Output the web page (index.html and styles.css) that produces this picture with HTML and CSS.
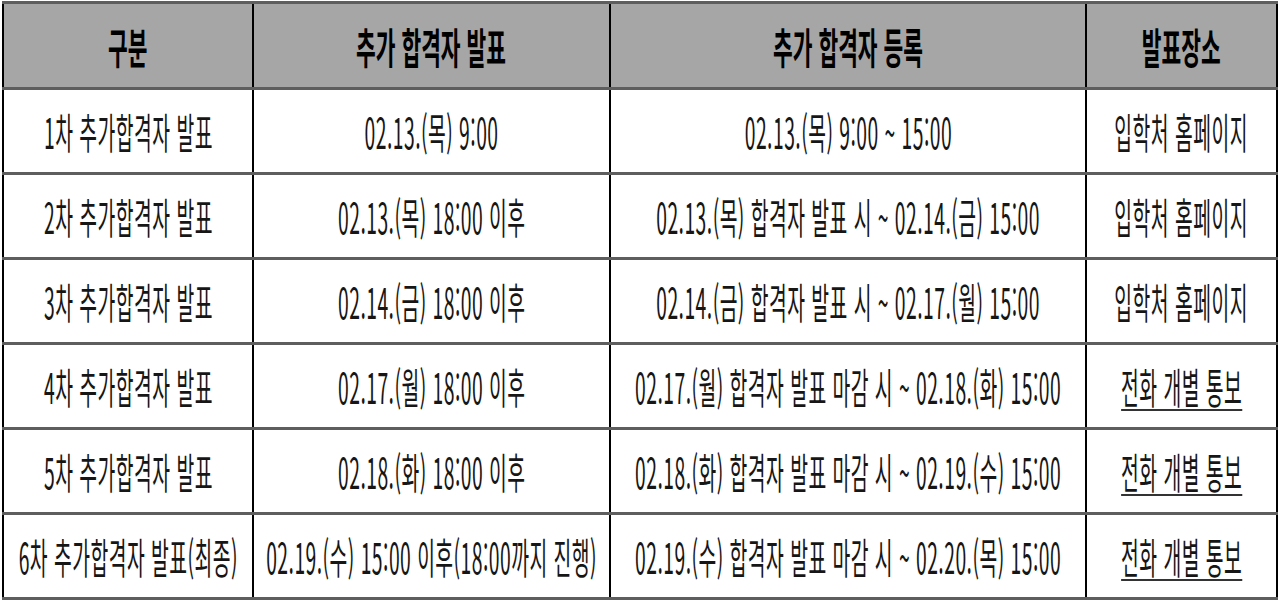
FILE: index.html
```html
<!DOCTYPE html>
<html lang="ko">
<head>
<meta charset="utf-8">
<title>추가 합격자 발표 일정</title>
<link rel="stylesheet" href="styles.css">
</head>
<body>
<table class="schedule">
  <colgroup>
    <col class="c1"><col class="c2"><col class="c3"><col class="c4">
  </colgroup>
  <thead>
    <tr>
      <th><div class="cell"><span class="hd">구분</span></div></th>
      <th><div class="cell"><span class="hd">추가 합격자 발표</span></div></th>
      <th><div class="cell"><span class="hd">추가 합격자 등록</span></div></th>
      <th><div class="cell"><span class="hd">발표장소</span></div></th>
    </tr>
  </thead>
  <tbody>
    <tr>
      <td><div class="cell"><span class="tx">1차 추가합격자 발표</span></div></td>
      <td><div class="cell"><span class="tx">02.13.(목) 9:00</span></div></td>
      <td><div class="cell"><span class="tx">02.13.(목) 9:00 ~ 15:00</span></div></td>
      <td><div class="cell"><span class="tx">입학처 홈페이지</span></div></td>
    </tr>
    <tr>
      <td><div class="cell"><span class="tx">2차 추가합격자 발표</span></div></td>
      <td><div class="cell"><span class="tx">02.13.(목) 18:00 이후</span></div></td>
      <td><div class="cell"><span class="tx">02.13.(목) 합격자 발표 시 ~ 02.14.(금) 15:00</span></div></td>
      <td><div class="cell"><span class="tx">입학처 홈페이지</span></div></td>
    </tr>
    <tr>
      <td><div class="cell"><span class="tx">3차 추가합격자 발표</span></div></td>
      <td><div class="cell"><span class="tx">02.14.(금) 18:00 이후</span></div></td>
      <td><div class="cell"><span class="tx">02.14.(금) 합격자 발표 시 ~ 02.17.(월) 15:00</span></div></td>
      <td><div class="cell"><span class="tx">입학처 홈페이지</span></div></td>
    </tr>
    <tr>
      <td><div class="cell"><span class="tx">4차 추가합격자 발표</span></div></td>
      <td><div class="cell"><span class="tx">02.17.(월) 18:00 이후</span></div></td>
      <td><div class="cell"><span class="tx">02.17.(월) 합격자 발표 마감 시 ~ 02.18.(화) 15:00</span></div></td>
      <td><div class="cell"><span class="tx ul">전화 개별 통보</span></div></td>
    </tr>
    <tr>
      <td><div class="cell"><span class="tx">5차 추가합격자 발표</span></div></td>
      <td><div class="cell"><span class="tx">02.18.(화) 18:00 이후</span></div></td>
      <td><div class="cell"><span class="tx">02.18.(화) 합격자 발표 마감 시 ~ 02.19.(수) 15:00</span></div></td>
      <td><div class="cell"><span class="tx ul">전화 개별 통보</span></div></td>
    </tr>
    <tr>
      <td><div class="cell"><span class="tx">6차 추가합격자 발표(최종)</span></div></td>
      <td><div class="cell"><span class="tx">02.19.(수) 15:00 이후(18:00까지 진행)</span></div></td>
      <td><div class="cell"><span class="tx">02.19.(수) 합격자 발표 마감 시 ~ 02.20.(목) 15:00</span></div></td>
      <td><div class="cell"><span class="tx ul">전화 개별 통보</span></div></td>
    </tr>
  </tbody>
</table>
</body>
</html>
```
FILE: styles.css
```css
html, body {
  margin: 0;
  padding: 0;
  background: #ffffff;
  overflow: hidden;
}

body {
  font-family: "Noto Sans CJK KR", "Noto Sans", sans-serif;
  color: #111;
}

.schedule {
  border-collapse: collapse;
  table-layout: fixed;
  width: 1274px;
  margin: 1px 0 0 2px;
}

.c1 { width: 250px; }
.c2 { width: 357px; }
.c3 { width: 476px; }
.c4 { width: 191px; }

.schedule th,
.schedule td {
  padding: 0;
  border-left: 2px solid #000;
  border-right: 2px solid #000;
  border-top: 3px solid #5e5e5e;
  border-bottom: 3px solid #5e5e5e;
  overflow: hidden;
}

.schedule th {
  background: #a6a6a6;
  height: 83px;
}

.schedule td {
  height: 82px;
  background: #fff;
}

.cell {
  display: flex;
  justify-content: center;
  align-items: center;
  height: 100%;
}

.hd,
.tx {
  display: inline-block;
  white-space: nowrap;
  flex: none;
  line-height: 1;
}

.hd {
  font-size: 42px;
  font-weight: 700;
  color: #000;
  transform: scaleX(0.51);
}

.tx {
  font-size: 42px;
  font-weight: 400;
  color: #161616;
  letter-spacing: 1px;
  transform: scaleX(0.46);
}

.ul {
  text-decoration: underline;
  text-decoration-thickness: 2px;
  text-underline-offset: 5px;
  text-decoration-color: #333;
}
```
